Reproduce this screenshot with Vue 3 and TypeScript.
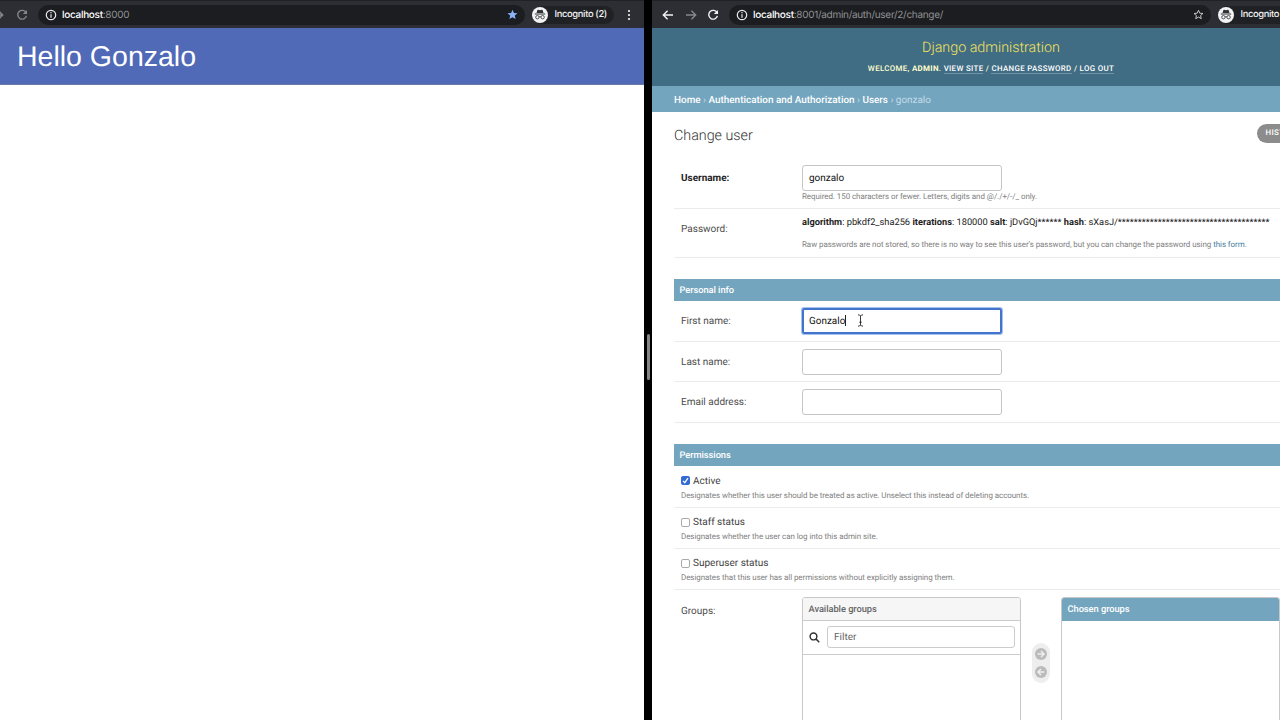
<script setup lang="ts">
import { ref } from 'vue'

interface Permission {
  label: string
  help: string
  checked: boolean
}

const username = ref('gonzalo')
const profile = [
  { label: 'First name:', value: 'Gonzalo', focused: true },
  { label: 'Last name:', value: '', focused: false },
  { label: 'Email address:', value: '', focused: false },
]
const permissions = ref<Permission[]>([
  { label: 'Active', help: 'Designates whether this user should be treated as active. Unselect this instead of deleting accounts.', checked: true },
  { label: 'Staff status', help: 'Designates whether the user can log into this admin site.', checked: false },
  { label: 'Superuser status', help: 'Designates that this user has all permissions without explicitly assigning them.', checked: false },
])
const hashMask = '*'.repeat(38)
</script>

<template>
  <div class="desktop">
    <section class="window left">
      <div class="chrome">
        <svg class="nav fwd-cut" viewBox="0 0 12 12"><path d="M1 6H10.5M6.5 1.8L10.7 6L6.5 10.2" /></svg>
        <svg class="nav reload dim" viewBox="0 0 12 12"><path d="M10 3.6A4.4 4.4 0 1 0 10.4 6.9" /><path class="solid" d="M11 0.9V5.1H6.8Z" /></svg>
        <div class="omnibox">
          <svg class="info" viewBox="0 0 12 12"><circle cx="6" cy="6" r="4.7" /><path d="M6 5.3V8.7M6 3.1V4.3" /></svg>
          <span class="url"><b>localhost</b>:8000</span>
          <svg class="star on" viewBox="0 0 24 24"><path d="M12 1.5L15.1 8.5L22.8 9.3L17 14.4L18.7 22L12 18L5.3 22L7 14.4L1.2 9.3L8.9 8.5Z" /></svg>
        </div>
        <div class="incognito">
          <svg class="spy" viewBox="0 0 16 16"><circle cx="8" cy="8" r="8" fill="#f1f3f4" /><path d="M5.3 3.2Q5.6 2.6 6.3 2.8L8 3.2L9.7 2.8Q10.4 2.6 10.7 3.2L11.5 6H4.5Z" fill="#303135" /><path d="M2.8 7H13.2" stroke="#303135" stroke-width="1" /><g fill="none" stroke="#303135" stroke-width=".8"><circle cx="5.4" cy="10.2" r="1.7" /><circle cx="10.6" cy="10.2" r="1.7" /><path d="M7.1 10Q8 9.3 8.9 10" /></g></svg>
          <span>Incognito (2)</span>
        </div>
        <svg class="dots" viewBox="0 0 4 12"><circle cx="2" cy="2" r="1.1" /><circle cx="2" cy="6" r="1.1" /><circle cx="2" cy="10" r="1.1" /></svg>
      </div>
      <header class="hello"><h1>Hello Gonzalo</h1></header>
    </section>

    <div class="divider"><i /></div>

    <section class="window right">
      <div class="chrome">
        <svg class="nav" viewBox="0 0 12 12"><path d="M11 6H1.5M5.6 1.7L1.3 6L5.6 10.3" /></svg>
        <svg class="nav dim" viewBox="0 0 12 12"><path d="M1 6H10.5M6.4 1.7L10.7 6L6.4 10.3" /></svg>
        <svg class="nav reload" viewBox="0 0 12 12"><path d="M10 3.6A4.4 4.4 0 1 0 10.4 6.9" /><path class="solid" d="M11 0.9V5.1H6.8Z" /></svg>
        <div class="omnibox">
          <svg class="info" viewBox="0 0 12 12"><circle cx="6" cy="6" r="4.7" /><path d="M6 5.3V8.7M6 3.1V4.3" /></svg>
          <span class="url"><b>localhost</b>:8001/admin/auth/user/2/change/</span>
          <svg class="star" viewBox="0 0 24 24"><path d="M12 2.8L14.8 9.1L21.7 9.8L16.5 14.4L18 21.1L12 17.6L6 21.1L7.5 14.4L2.3 9.8L9.2 9.1Z" /></svg>
        </div>
        <div class="incognito">
          <svg class="spy" viewBox="0 0 16 16"><circle cx="8" cy="8" r="8" fill="#f1f3f4" /><path d="M5.3 3.2Q5.6 2.6 6.3 2.8L8 3.2L9.7 2.8Q10.4 2.6 10.7 3.2L11.5 6H4.5Z" fill="#303135" /><path d="M2.8 7H13.2" stroke="#303135" stroke-width="1" /><g fill="none" stroke="#303135" stroke-width=".8"><circle cx="5.4" cy="10.2" r="1.7" /><circle cx="10.6" cy="10.2" r="1.7" /><path d="M7.1 10Q8 9.3 8.9 10" /></g></svg>
          <span>Incognito</span>
        </div>
      </div>

      <header class="admin-header">
        <h1>Django administration</h1>
        <p>WELCOME, <b>ADMIN</b>. <a>VIEW SITE</a> / <a>CHANGE PASSWORD</a> / <a>LOG OUT</a></p>
      </header>
      <nav class="crumbs"><a>Home</a> › <a>Authentication and Authorization</a> › <a>Users</a> › gonzalo</nav>

      <main>
        <div class="title">
          <h2>Change user</h2>
          <span class="history">HISTORY</span>
        </div>

        <div class="row user-row">
          <label class="required">Username:</label>
          <div>
            <div class="field">{{ username }}</div>
            <p class="help user-help">Required. 150 characters or fewer. Letters, digits and @/./+/-/_ only.</p>
          </div>
        </div>
        <div class="row pass-row">
          <label>Password:</label>
          <div>
            <p class="digest"><b>algorithm</b>: pbkdf2_sha256 <b>iterations</b>: 180000 <b>salt</b>: jDvGQj****** <b>hash</b>: sXasJ/{{ hashMask }}</p>
            <p class="help pass-help">Raw passwords are not stored, so there is no way to see this user’s password, but you can change the password using <a>this form</a>.</p>
          </div>
        </div>

        <h3>Personal info</h3>
        <div v-for="item in profile" :key="item.label" class="row info-row">
          <label>{{ item.label }}</label>
          <div class="field" :class="{ focused: item.focused }">
            {{ item.value }}<i v-if="item.focused" class="caret" />
            <svg v-if="item.focused" class="ibeam" viewBox="0 0 7 13"><path d="M1 .8Q3 .8 3.5 2Q4 .8 6 .8M3.5 2V11M1 12.2Q3 12.2 3.5 11Q4 12.2 6 12.2M2.3 8.2H4.7" /></svg>
          </div>
        </div>

        <h3>Permissions</h3>
        <div v-for="item in permissions" :key="item.label" class="perm-row">
          <div class="check">
            <span class="box" :class="{ checked: item.checked }">
              <svg v-if="item.checked" viewBox="0 0 9 9"><path d="M2 4.8L3.8 6.7L7 2.1" /></svg>
            </span>
            <label>{{ item.label }}</label>
          </div>
          <p class="help">{{ item.help }}</p>
        </div>

        <div class="groups">
          <label>Groups:</label>
          <div class="selector available">
            <h4>Available groups</h4>
            <div class="filter">
              <svg viewBox="0 0 12 12"><circle cx="4.9" cy="4.9" r="3.7" /><path d="M7.5 7.5L11.2 11.2" /></svg>
              <div class="filter-input">Filter</div>
            </div>
          </div>
          <div class="chooser">
            <svg viewBox="0 0 12 12"><circle cx="6" cy="6" r="6" /><path d="M2.6 6H8.7M6 3L9 6L6 9" /></svg>
            <svg viewBox="0 0 12 12"><circle cx="6" cy="6" r="6" /><path d="M9.4 6H3.3M6 3L3 6L6 9" /></svg>
          </div>
          <div class="selector chosen"><h4>Chosen groups</h4></div>
        </div>
      </main>
    </section>
  </div>
</template>

<style>
body { margin: 0; overflow: hidden; background: #fff; }
</style>

<style scoped>
* { box-sizing: border-box; }
h1, h2, h3, h4, p { margin: 0; font-weight: 400; }
svg { display: block; flex: none; fill: none; }
.desktop { display: flex; width: 1280px; height: 720px; overflow: hidden; background: #fff; font-family: Roboto, "Liberation Sans", sans-serif; color: #333; text-rendering: geometricPrecision; }
.window { overflow: hidden; white-space: nowrap; }
.left { width: 644px; flex: none; }
.right { width: 628px; flex: none; }
.divider { width: 8px; flex: none; background: #000; display: flex; align-items: center; justify-content: center; padding-bottom: 7px; }
.divider i { width: 3px; height: 46px; border-radius: 2px; background: #858585; }

.chrome { height: 28px; background: #2d2e33; border-top: 1px solid #202125; display: flex; align-items: center; font-family: Inter, Roboto, sans-serif; font-size: 10px; color: #f1f3f4; }
.nav { width: 12px; height: 12px; stroke: #f1f3f4; stroke-width: 1.4; }
.nav.dim, .fwd-cut { stroke: #85878b; }
.nav .solid { fill: #f1f3f4; stroke: none; }
.nav.dim .solid { fill: #85878b; }
.fwd-cut { margin-left: -8px; }
.left .reload { margin-left: 12px; }
.right .nav { margin-left: 10.7px; }
.right .nav:first-child { margin-left: 10px; }
.omnibox { height: 20px; flex: none; border-radius: 10px; background: #1c1d20; display: flex; align-items: center; padding: 0 7px; color: #8f9195; }
.left .omnibox { width: 487px; margin-left: 10px; }
.right .omnibox { width: 482px; margin-left: 9.6px; }
.info { width: 12px; height: 12px; stroke: #e8eaed; stroke-width: 1.2; }
.url { margin-left: 5px; letter-spacing: -.3px; }
.url b { font-weight: 500; color: #fff; }
.star { width: 11px; height: 11px; margin-left: auto; stroke: #d5d7da; stroke-width: 2; }
.star.on { fill: #8ab4f8; stroke: none; }
.incognito { height: 18px; border-radius: 9px; background: #202124; display: flex; align-items: center; gap: 6.5px; color: #f1f3f4; letter-spacing: -.35px; font-weight: 500; font-size: 9.4px; line-height: 12px; }
.incognito span { padding-top: 1px; }
.left .incognito { width: 82px; margin-left: 7px; }
.right .incognito { width: 82px; margin-left: 7px; flex: none; }
.spy { width: 16px; height: 16px; }
.dots { width: 4px; height: 12px; margin-left: 12.5px; fill: #f1f3f4; }
.hello { height: 57px; background: #506ab7; border-bottom: 1px solid #667ba9; padding-left: 17px; color: #fff; }
.hello h1 { font: 28.5px/59px "Liberation Sans", Arial, sans-serif; }

.admin-header { height: 58px; background: #406c84; padding: 11px 0 0; width: 678px; text-align: center; }
.admin-header h1 { color: #f9e65a; font-weight: 300; font-size: 14.3px; line-height: 18px; }
.admin-header p { margin-top: 7px; font-size: 7.9px; line-height: 10px; color: #ffc; letter-spacing: .33px; font-weight: 500; }
.admin-header p a { color: #fff; border-bottom: 1px solid #7195a6; }
.crumbs { height: 26px; background: #74a5be; padding-left: 22px; color: #c4dce8; font-size: 9.92px; line-height: 29px; }
.crumbs a { color: #fff; font-weight: 500; }
main { padding-left: 22px; width: 680px; }
.title { height: 46px; display: flex; }
.title h2 { font-size: 14.3px; line-height: 18px; margin-top: 15px; font-weight: 300; color: #333; width: 583px; }
.history { background: #8c8c8c; color: #fff; height: 19px; border-radius: 10px; margin-top: 12px; padding: 0 8.5px; font-size: 7.9px; letter-spacing: .35px; line-height: 18px; font-weight: 500; }
.row { display: grid; grid-template-columns: 121px 1fr; padding-left: 7px; border-bottom: 1px solid #ececec; font-size: 10.03px; }
.row label { line-height: 14px; color: #4d4d4d; }
.row label.required { color: #222; font-weight: 700; font-size: 9.95px; }
.field { position: relative; width: 200px; height: 26px; border: 1px solid #c5c5c5; border-radius: 3px; padding-left: 6px; font-size: 9.95px; line-height: 26px; color: #111; }
.focused { border: 2px solid #4375cc; padding-left: 5px; line-height: 24px; border-radius: 2px; box-shadow: 0 0 0 1px #a5c3ee; }
.caret { display: inline-block; width: 1px; height: 11px; background: #222; vertical-align: -2px; }
.ibeam { position: absolute; left: 53px; top: 4px; width: 7px; height: 13px; stroke: #222; stroke-width: .9; }
.help { color: #808080; font-size: 7.97px; letter-spacing: -.06px; line-height: 10px; }
.user-row { height: 51px; padding-top: 6px; }
.user-row label { margin-top: 8px; }
.user-row .field { margin-top: 1px; }
.user-help { margin-top: 1px; }
.pass-row { height: 48.5px; padding-top: 7px; margin-bottom: 21.5px; }
.pass-row label { margin-top: 6.5px; }
.digest { font-size: 9.28px; line-height: 13px; color: #222; }
.pass-help { margin-top: 11px; }
.help a { color: #447e9b; }
h3 { height: 22px; background: #74a5be; color: #fff; font-size: 9.3px; line-height: 24px; font-weight: 500; padding-left: 5.5px; letter-spacing: -.05px; }
.info-row { height: 40.6px; padding-top: 7px; }
.info-row label { margin-top: 7.3px; }
.info-row + h3 { margin-top: 21.5px; }
.perm-row { height: 41.3px; padding: 8px 0 0 7px; border-bottom: 1px solid #ececec; }
.check { display: flex; align-items: center; height: 13px; gap: 3.3px; font-size: 10.03px; color: #444; }
.check label { line-height: 12px; padding-top: 2px; }
.box { width: 9px; height: 9px; border: 1px solid #aaa; border-radius: 2px; margin-left: -.3px; }
.box.checked { border: 0; background: #326bd4; }
.box svg { stroke: #fff; stroke-width: 1.2; }
.perm-row .help { margin-top: 3.3px; }
.groups { display: flex; padding: 7.5px 0 0 7px; align-items: flex-start; font-size: 10px; color: #4d4d4d; }
.groups > label { width: 121px; line-height: 14px; margin-top: 7px; }
.selector { width: 219px; height: 180px; border: 1px solid #c8c8c8; border-radius: 3px; overflow: hidden; margin-top: -.5px; }
.selector h4 { height: 23px; background: #f6f6f6; border-bottom: 1px solid #ccc; font-size: 9.3px; line-height: 23px; padding-left: 5.5px; font-weight: 500; color: #666; letter-spacing: -.05px; }
.chosen h4 { background: #74a5be; color: #fff; border-color: #74a5be; }
.filter { display: flex; height: 33.5px; border-bottom: 1px solid #ccc; padding: 5px 5px 5px 6px; align-items: center; }
.filter svg { width: 11px; height: 11px; stroke: #333; stroke-width: 1.6; }
.filter-input { width: 188px; height: 22px; margin-left: 7px; border: 1px solid #ccc; border-radius: 3px; padding-left: 6px; line-height: 22px; color: #666; }
.chooser { width: 18px; height: 40px; border-radius: 9px; margin: 45.5px 11px 0; background: #eee; padding: 5px 3px; display: flex; flex-direction: column; gap: 6px; }
.chooser svg { width: 12px; height: 12px; fill: #bbb; stroke: #eee; stroke-width: 1.5; }
.chooser circle { stroke: none; }
.chooser path { fill: none; }
</style>
